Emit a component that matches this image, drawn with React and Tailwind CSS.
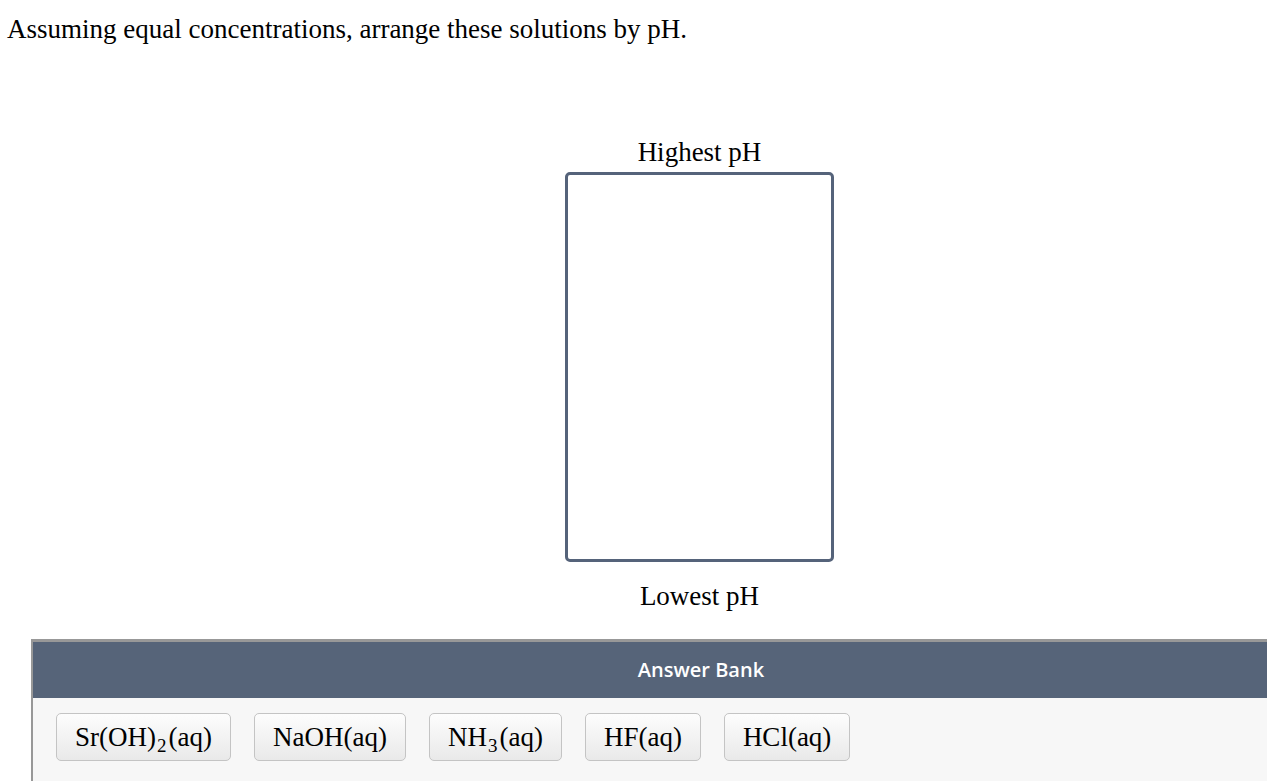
import React from 'react'

const choices = [
	{ id: 'sr', base: 'Sr(OH)', sub: '2', rest: '(aq)' },
	{ id: 'naoh', base: 'NaOH(aq)' },
	{ id: 'nh3', base: 'NH', sub: '3', rest: '(aq)' },
	{ id: 'hf', base: 'HF(aq)' },
	{ id: 'hcl', base: 'HCl(aq)' },
]

const Chip = ({ c }) => (
	<div className="h-[48px] px-[18px] flex items-center border border-[#c4c4c4] rounded-[5px] bg-linear-to-b from-[#fdfdfd] to-[#e9e9e9] text-[27px] text-black whitespace-nowrap">
		<span>{c.base}</span>
		{c.sub && <span className="text-[19px] relative top-[9px] ml-[1px] mr-[2px]">{c.sub}</span>}
		{c.rest && <span>{c.rest}</span>}
	</div>
)

export default function App() {
	return (
		<main className="w-full h-[781px] overflow-hidden bg-white font-['Liberation_Serif',serif] text-black">
			<p className="pl-[7px] pt-[12px] text-[27px] leading-[34px]">
				Assuming equal concentrations, arrange these solutions by pH.
			</p>

			<div className="w-[1399px]">
				<div className="mt-[89px] text-center text-[27px] leading-[34px]">Highest pH</div>
				<div className="mt-[3px] mx-auto w-[269px] h-[390px] border-[3px] border-[#55637a] rounded-[5px]" />
				<div className="mt-[17px] text-center text-[27px] leading-[34px]">Lowest pH</div>

				<section className="mt-[26px] ml-[31px] w-[1338px] border-t-[3px] border-l-2 border-[#989898]">
					<div className="h-[56px] bg-[#566479] flex items-center justify-center text-white text-[20px] font-semibold font-['Open_Sans',sans-serif]">
						Answer Bank
					</div>
					<div className="bg-[#f7f7f7] pl-[23px] pt-[15px] pb-[30px] flex gap-[23px]">
						{choices.map(c => <Chip key={c.id} c={c} />)}
					</div>
				</section>
			</div>
		</main>
	)
}
